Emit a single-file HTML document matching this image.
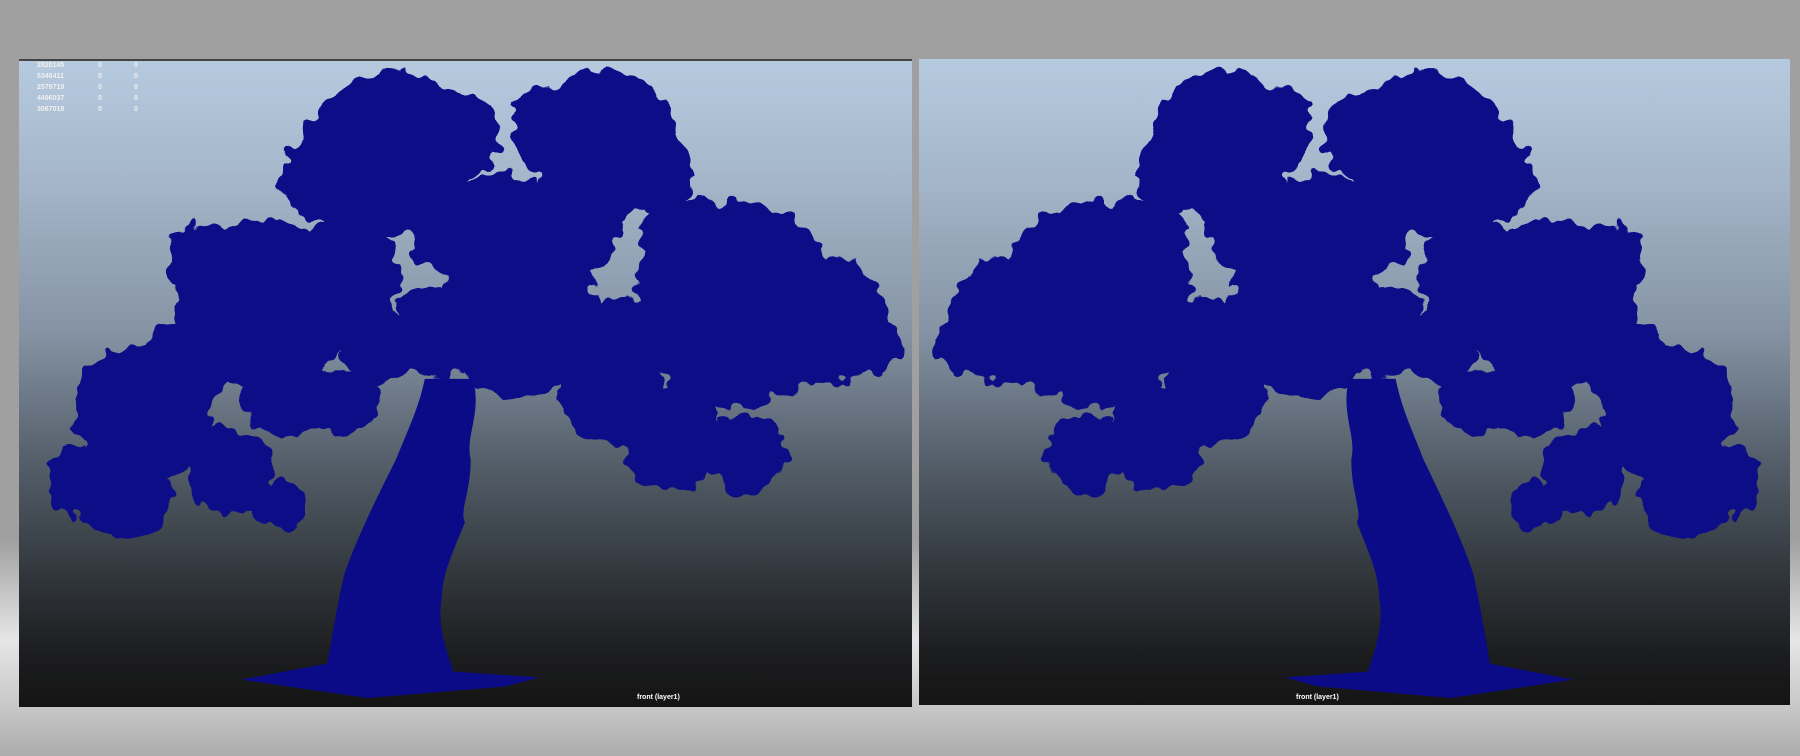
<!DOCTYPE html>
<html><head><meta charset="utf-8"><style>
html,body{margin:0;padding:0;width:1800px;height:756px;overflow:hidden}
body{position:relative;background:linear-gradient(180deg,#a0a0a0 0px,#a0a0a0 540px,#e6e6e6 640px,#c6c6c6 710px,#acacac 756px);font-family:"Liberation Sans",sans-serif}
.p{position:absolute;top:59px;height:646px;background:linear-gradient(180deg,#b6cadf 0%,#a3b4c8 20%,#8593a4 42%,#596470 60%,#343a40 78%,#1c1d1f 92%,#141414 100%)}
#l{left:19px;width:893px;border-top:2px solid #444}
#r{left:919px;width:871px}
.n{position:absolute;color:#f0f0f0;font-size:7px;font-weight:bold}
.lab{position:absolute;color:#fff;font-size:7px;font-weight:bold;top:694px}
svg{position:absolute;left:0;top:0}
</style></head><body>
<div class="p" id="l"></div><div class="p" id="r"></div>
<svg width="1800" height="756">
<defs>
<filter id="f" x="-10%" y="-10%" width="120%" height="120%">
<feTurbulence type="fractalNoise" baseFrequency="0.06" numOctaves="2" seed="3"/>
<feDisplacementMap in="SourceGraphic" scale="22" xChannelSelector="R" yChannelSelector="G"/>
</filter>
<g id="tree" fill="#0b0b88">
<g filter="url(#f)">
<circle cx="340" cy="135" r="72"/><circle cx="290" cy="150" r="45"/><circle cx="395" cy="120" r="40"/>
<circle cx="525" cy="125" r="65"/><circle cx="570" cy="150" r="35"/><circle cx="480" cy="110" r="35"/>
<circle cx="440" cy="200" r="50"/><circle cx="395" cy="200" r="40"/><circle cx="500" cy="200" r="40"/>
<circle cx="230" cy="265" r="75"/><circle cx="180" cy="230" r="35"/><circle cx="300" cy="240" r="50"/>
<circle cx="640" cy="265" r="90"/><circle cx="720" cy="280" r="55"/><circle cx="760" cy="300" r="25"/><circle cx="600" cy="210" r="40"/>
<circle cx="450" cy="275" r="70"/><circle cx="380" cy="290" r="40"/><circle cx="330" cy="300" r="35"/><circle cx="540" cy="300" r="40"/>
<circle cx="125" cy="360" r="60"/><circle cx="70" cy="420" r="30"/><circle cx="110" cy="430" r="40"/><circle cx="200" cy="410" r="38"/><circle cx="160" cy="320" r="40"/><circle cx="250" cy="340" r="40"/>
<circle cx="585" cy="380" r="45"/><circle cx="650" cy="395" r="35"/><circle cx="530" cy="340" r="45"/>
<circle cx="300" cy="350" r="30"/><circle cx="245" cy="440" r="22"/>
</g>
<path d="M370 330 L412 330 C420 360 405 380 410 400 C410 430 400 445 405 455 C395 480 385 500 385 520 C380 545 390 570 395 585 L470 590 L440 598 L320 608 L210 592 L285 578 C290 550 295 520 300 500 C310 470 330 430 345 400 C355 375 365 355 370 330 Z"/>
</g>
</defs>
<g transform="scale(1.148)"><use href="#tree"/></g>
<g transform="translate(1806,0) scale(-1.109,1.148)"><use href="#tree"/></g>
</svg>
<div class="n" style="left:37px;top:62px">2820145</div><div class="n" style="left:98px;top:62px">0</div><div class="n" style="left:134px;top:62px">0</div>
<div class="n" style="left:37px;top:73px">5346411</div><div class="n" style="left:98px;top:73px">0</div><div class="n" style="left:134px;top:73px">0</div>
<div class="n" style="left:37px;top:84px">2579719</div><div class="n" style="left:98px;top:84px">0</div><div class="n" style="left:134px;top:84px">0</div>
<div class="n" style="left:37px;top:95px">4496037</div><div class="n" style="left:98px;top:95px">0</div><div class="n" style="left:134px;top:95px">0</div>
<div class="n" style="left:37px;top:106px">3067018</div><div class="n" style="left:98px;top:106px">0</div><div class="n" style="left:134px;top:106px">0</div>
<div class="lab" style="left:637px">front (layer1)</div>
<div class="lab" style="left:1296px">front (layer1)</div>
</body></html>
